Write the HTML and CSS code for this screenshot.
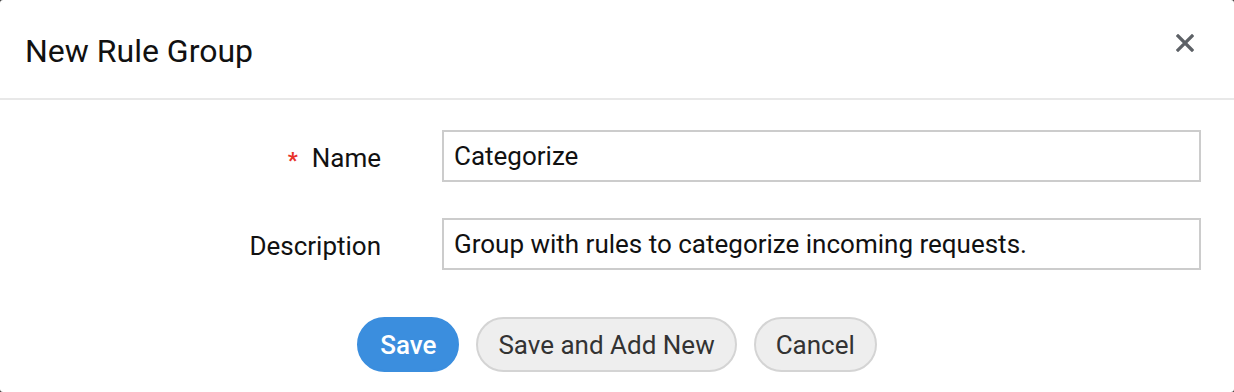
FILE: index.html
```html
<!DOCTYPE html>
<html>
<head>
<meta charset="utf-8">
<link rel="stylesheet" href="styles.css">
</head>
<body>
<div class="dialog">
  <div class="header">
    <h1 class="title">New Rule Group</h1>
    <button class="close" aria-label="Close">
      <svg width="18" height="18" viewBox="0 0 18 18"><path d="M2 2L16 16M16 2L2 16" stroke="#5d6166" stroke-width="3.2" stroke-linecap="square"/></svg>
    </button>
  </div>
  <div class="form">
    <label class="label"><span class="req">*</span>Name</label>
    <div class="field">Categorize</div>
    <label class="label">Description</label>
    <div class="field">Group with rules to categorize incoming requests.</div>
  </div>
  <div class="actions">
    <button class="btn primary">Save</button>
    <button class="btn">Save and Add New</button>
    <button class="btn">Cancel</button>
  </div>
</div>
</body>
</html>
```
FILE: styles.css
```css
html, body {
  margin: 0;
  padding: 0;
  background: #3a3a3a;
}
body {
  font-family: Roboto, "Liberation Sans", sans-serif;
  color: #111;
}
.dialog {
  width: 1234px;
  height: 392px;
  background: #fff;
  border-radius: 3px;
  overflow: hidden;
}
.header {
  height: 98px;
  border-bottom: 2px solid #e8e8e8;
  display: flex;
  align-items: center;
  justify-content: space-between;
  padding: 0 40px 0 25px;
  box-sizing: content-box;
}
.title {
  margin: 0;
  font-size: 32px;
  font-weight: 400;
  color: #111;
  padding-top: 4px;
}
.close {
  border: 0;
  background: none;
  padding: 0;
  width: 18px;
  height: 18px;
  margin-top: -12px;
  display: flex;
}
.form {
  display: grid;
  grid-template-columns: 381px 1fr;
  column-gap: 61px;
  row-gap: 36px;
  padding: 30px 33px 0 0;
  align-items: center;
}
.label {
  text-align: right;
  font-size: 26px;
  color: #111;
  padding-top: 4px;
}
.req {
  color: #e8322a;
  font-size: 22px;
  font-weight: 700;
  margin-right: 14px;
  position: relative;
  top: 1px;
}
.field {
  height: 52px;
  box-sizing: border-box;
  border: 2px solid #cccccc;
  padding: 0 10px;
  display: flex;
  align-items: center;
  font-size: 26px;
  color: #111;
}
.actions {
  display: flex;
  justify-content: center;
  gap: 17px;
  padding-top: 47px;
}
.btn {
  height: 55px;
  box-sizing: border-box;
  border-radius: 28px;
  border: 2px solid #d4d4d4;
  background: #eeeeee;
  color: #333;
  font-family: Roboto, "Liberation Sans", sans-serif;
  font-size: 26px;
  padding: 0 20px;
}
.btn.primary {
  background: #3b8ede;
  border-color: #3b8ede;
  color: #fff;
  font-weight: 500;
  padding: 0 21px;
}
```
